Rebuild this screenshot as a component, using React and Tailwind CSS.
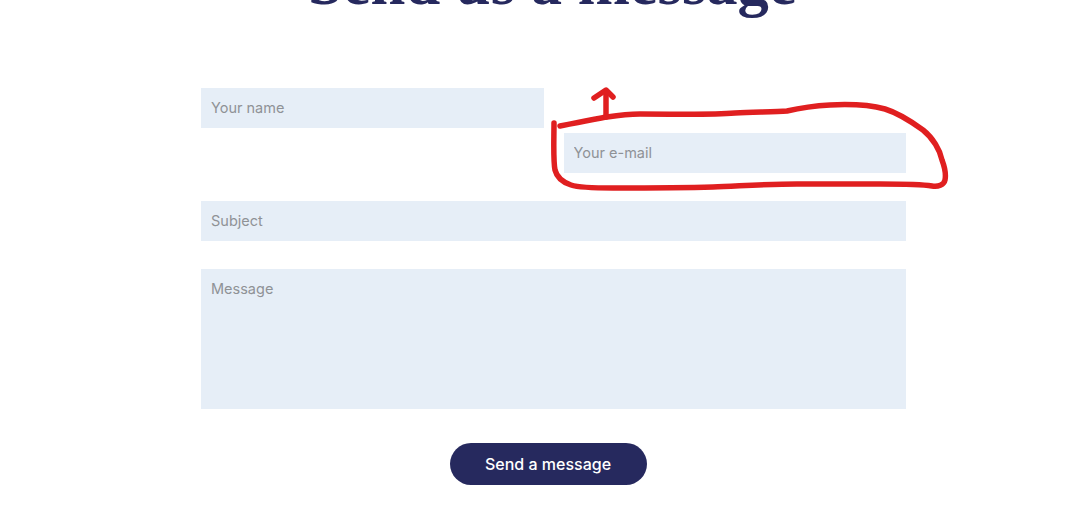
export default function App() {
  const field = "block w-full h-10 bg-[#e6eef7] px-[10px] pb-[2px] text-[14.5px] text-[#26295e] outline-none placeholder:text-[#8f9296]";
  return (
    <div className="relative h-[525px] w-full overflow-hidden bg-white font-['Inter','Open_Sans',sans-serif]">
      <h1 className="-mt-[53px] ml-[308px] h-[141px] whitespace-nowrap font-['Liberation_Serif',serif] text-[62.6px] leading-[72px] font-bold text-[#26295e]">
        Send us a message
      </h1>
      <form className="ml-[201px] flex w-[705px] flex-col">
        <div className="grid grid-cols-2 gap-x-5">
          <input className={field} placeholder="Your name" />
          <input className={`${field} mt-[45px]`} placeholder="Your e-mail" />
        </div>
        <input className={`${field} mt-7`} placeholder="Subject" />
        <textarea className={`${field} mt-7 h-[140px] resize-none pt-[9px]`} placeholder="Message" />
        <div className="mt-[34px] flex justify-center pr-[11px]">
          <button type="button" className="h-[42px] w-[197px] rounded-full bg-[#26295e] text-[16px] font-medium text-white">
            Send a message
          </button>
        </div>
      </form>
      <svg className="pointer-events-none absolute top-0 left-0" width="1087" height="525" fill="none" stroke="#e01f20" strokeWidth="5.5" strokeLinecap="round" strokeLinejoin="round">
        <path d="M560 126C580 122 600 118 607 117C620 115 630 114 640 114C680 114 710 115 735 113C755 112 775 112 787 111C800 108 812 106 830 105C850 104 870 105 885 109C898 113 912 122 923 130C933 138 940 150 942 160C945 168 946 175 945 180C944 185 938 187 932 186C920 184 905 184 880 184C850 184 820 184 797 184C770 184 740 186 713 187C680 188 640 188 613 188C595 188 580 188 571 185C562 182 557 178 555 170C553 160 554 140 554 123" />
        <path d="M606 117L606 93" />
        <path d="M594 98L606 90L613 97" />
      </svg>
    </div>
  );
}
